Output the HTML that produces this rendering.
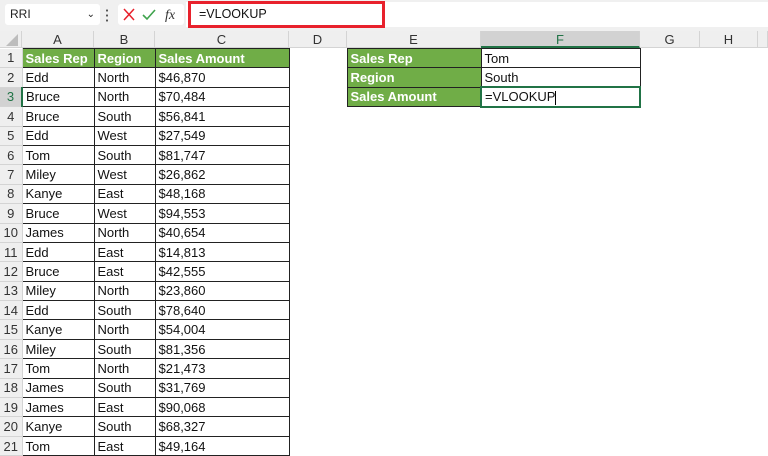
<!DOCTYPE html>
<html><head><meta charset="utf-8"><style>
*{margin:0;padding:0;box-sizing:border-box}
body{width:768px;height:453px;overflow:hidden;background:#fff;font-family:"Liberation Sans",Calibri,sans-serif;position:relative}
.tb{position:absolute;left:0;top:0;width:768px;height:31px;background:#f0f0f0}
.nb{position:absolute;left:5px;top:4px;width:95px;height:21px;background:#fff;border-radius:3px;font-size:12px;line-height:21px;padding-left:5px;color:#222}
.ic{position:absolute;left:118px;top:4px;width:66px;height:21px;background:#fff;border-radius:3px}
.fb{position:absolute;left:186px;top:2px;width:582px;height:25px;background:#fff}
.red{position:absolute;left:188px;top:1px;width:197px;height:27px;border:3px solid #e8212c;font-size:12.5px;line-height:21px;padding-left:8px;color:#111}
.hdr{position:absolute;top:31px;height:17px;background:#efefef;border-right:1px solid #d4d4d4;border-bottom:1px solid #d4d4d4;font-size:13px;text-align:center;line-height:17px;color:#333}
</style></head><body>
<div class="tb"></div>
<div class="nb">RRI<span style="position:absolute;right:5px;top:0;font-size:10px">&#8964;</span></div>
<div style="position:absolute;left:106px;top:8px;width:2px;height:14px;background:radial-gradient(circle,#555 1px,transparent 1.2px) 0 0/2px 5px"></div>
<div class="ic">
<svg width="66" height="21" style="position:absolute;left:0;top:0"><path d="M6 5l10 11M16 5L6 16" stroke="#e8212c" stroke-width="1.5" fill="none"/><path d="M25 11l4 4 8-9" stroke="#3fa34d" stroke-width="1.6" fill="none"/><text x="47" y="15" font-family="Liberation Serif" font-style="italic" font-size="14" fill="#333">fx</text></svg>
</div>
<div class="fb"></div>
<div class="red">=VLOOKUP</div>

<div class="hdr" style="left:0;width:22px"><svg width="20" height="16" style="position:absolute;left:1px;top:0"><path d="M17 3L17 15L5 15Z" fill="#bdbdbd"/></svg></div>
<div class="hdr" style="left:22px;width:72px">A</div>
<div class="hdr" style="left:94px;width:61px">B</div>
<div class="hdr" style="left:155px;width:134px">C</div>
<div class="hdr" style="left:289px;width:58px">D</div>
<div class="hdr" style="left:347px;width:134px">E</div>
<div class="hdr" style="left:481px;width:159px;background:#d2d2d2;border-bottom:2px solid #217346;color:#217346">F</div>
<div class="hdr" style="left:640px;width:60px">G</div>
<div class="hdr" style="left:700px;width:58px">H</div>
<div class="hdr" style="left:758px;width:10px"></div>

<div style="position:absolute;left:0;top:48px">
<table style="border-collapse:collapse;table-layout:fixed;width:768px;font-size:13px">
<colgroup><col style="width:22px"><col style="width:72px"><col style="width:61px"><col style="width:134px"><col style="width:58px"><col style="width:134px"><col style="width:159px"><col style="width:60px"><col style="width:58px"><col style="width:10px"></colgroup>
<style>
td{height:19.4px;padding:0 3px;white-space:nowrap;color:#111;line-height:17px}
td.n{background:#efefef;text-align:center;color:#333;border-right:1px solid #d4d4d4;border-bottom:1px solid #d4d4d4;padding:0}
td.d{border:1px solid #222}
td.g{background:#70ad47;color:#fff;font-weight:bold;border:1px solid #222}
</style>
<tr><td class="n">1</td><td class="g">Sales Rep</td><td class="g">Region</td><td class="g">Sales Amount</td><td></td><td class="g">Sales Rep</td><td class="d">Tom</td><td></td><td></td><td></td></tr>
<tr><td class="n">2</td><td class="d">Edd</td><td class="d">North</td><td class="d">$46,870</td><td></td><td class="g">Region</td><td class="d">South</td><td></td><td></td><td></td></tr>
<tr><td class="n" style="background:#d2d2d2;color:#217346;border-right:2px solid #217346">3</td><td class="d">Bruce</td><td class="d">North</td><td class="d">$70,484</td><td></td><td class="g">Sales Amount</td><td class="d" style="border:2px solid #217346">=VLOOKUP<span style="display:inline-block;width:1px;height:14px;background:#000;vertical-align:middle"></span></td><td></td><td></td><td></td></tr>
<tr><td class="n">4</td><td class="d">Bruce</td><td class="d">South</td><td class="d">$56,841</td><td></td><td></td><td></td><td></td><td></td><td></td></tr>
<tr><td class="n">5</td><td class="d">Edd</td><td class="d">West</td><td class="d">$27,549</td><td></td><td></td><td></td><td></td><td></td><td></td></tr>
<tr><td class="n">6</td><td class="d">Tom</td><td class="d">South</td><td class="d">$81,747</td><td></td><td></td><td></td><td></td><td></td><td></td></tr>
<tr><td class="n">7</td><td class="d">Miley</td><td class="d">West</td><td class="d">$26,862</td><td></td><td></td><td></td><td></td><td></td><td></td></tr>
<tr><td class="n">8</td><td class="d">Kanye</td><td class="d">East</td><td class="d">$48,168</td><td></td><td></td><td></td><td></td><td></td><td></td></tr>
<tr><td class="n">9</td><td class="d">Bruce</td><td class="d">West</td><td class="d">$94,553</td><td></td><td></td><td></td><td></td><td></td><td></td></tr>
<tr><td class="n">10</td><td class="d">James</td><td class="d">North</td><td class="d">$40,654</td><td></td><td></td><td></td><td></td><td></td><td></td></tr>
<tr><td class="n">11</td><td class="d">Edd</td><td class="d">East</td><td class="d">$14,813</td><td></td><td></td><td></td><td></td><td></td><td></td></tr>
<tr><td class="n">12</td><td class="d">Bruce</td><td class="d">East</td><td class="d">$42,555</td><td></td><td></td><td></td><td></td><td></td><td></td></tr>
<tr><td class="n">13</td><td class="d">Miley</td><td class="d">North</td><td class="d">$23,860</td><td></td><td></td><td></td><td></td><td></td><td></td></tr>
<tr><td class="n">14</td><td class="d">Edd</td><td class="d">South</td><td class="d">$78,640</td><td></td><td></td><td></td><td></td><td></td><td></td></tr>
<tr><td class="n">15</td><td class="d">Kanye</td><td class="d">North</td><td class="d">$54,004</td><td></td><td></td><td></td><td></td><td></td><td></td></tr>
<tr><td class="n">16</td><td class="d">Miley</td><td class="d">South</td><td class="d">$81,356</td><td></td><td></td><td></td><td></td><td></td><td></td></tr>
<tr><td class="n">17</td><td class="d">Tom</td><td class="d">North</td><td class="d">$21,473</td><td></td><td></td><td></td><td></td><td></td><td></td></tr>
<tr><td class="n">18</td><td class="d">James</td><td class="d">South</td><td class="d">$31,769</td><td></td><td></td><td></td><td></td><td></td><td></td></tr>
<tr><td class="n">19</td><td class="d">James</td><td class="d">East</td><td class="d">$90,068</td><td></td><td></td><td></td><td></td><td></td><td></td></tr>
<tr><td class="n">20</td><td class="d">Kanye</td><td class="d">South</td><td class="d">$68,327</td><td></td><td></td><td></td><td></td><td></td><td></td></tr>
<tr><td class="n">21</td><td class="d">Tom</td><td class="d">East</td><td class="d">$49,164</td><td></td><td></td><td></td><td></td><td></td><td></td></tr>
</table>
</div>
</body></html>
